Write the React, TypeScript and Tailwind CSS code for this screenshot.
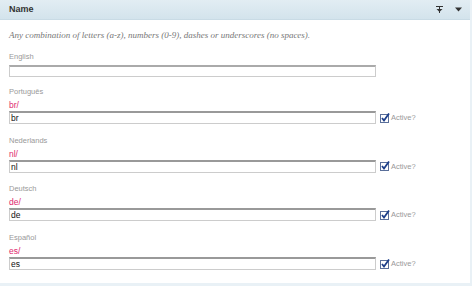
import React from "react";

const langs = [
    { name: "Português", prefix: "br/", value: "br" },
    { name: "Nederlands", prefix: "nl/", value: "nl" },
    { name: "Deutsch", prefix: "de/", value: "de" },
    { name: "Español", prefix: "es/", value: "es" },
];

function CheckIcon() {
    return (
        <svg width="10" height="10" viewBox="0 0 10 10">
            <rect x="0.5" y="1.5" width="8" height="8" fill="#fff" stroke="#5a6f9a" />
            <path d="M2 5 L4 7.5 L9 0.5" fill="none" stroke="#1d3f8a" strokeWidth="1.8" />
        </svg>
    );
}

export default function App() {
    return (
        <div
            className="w-[474px] h-[289px] bg-white overflow-hidden"
            style={{ fontFamily: '"Liberation Sans", Arial, sans-serif' }}
        >
            <div className="w-[472px] h-[286px] border-r-2 border-b-[3px] border-[#e9f1f6] flex flex-col">
                {/* header */}
                <div className="h-[20px] flex items-center justify-between pl-[9px] pr-[8px] bg-gradient-to-b from-[#e2edf3] to-[#d3e3ec] border-b border-[#c9dbe5]">
                    <span className="text-[9px] font-bold text-[#333]">Name</span>
                    <div className="flex items-center gap-[12px]">
                        <svg width="7" height="8" viewBox="0 0 7 8">
                            <rect x="0" y="0" width="7" height="1" fill="#333" />
                            <rect x="3" y="1" width="1" height="6" fill="#333" />
                            <path d="M0.5 3 L6.5 3 L3.5 6 Z" fill="#333" />
                        </svg>
                        <svg width="7" height="5" viewBox="0 0 7 5">
                            <path d="M0 0.5 L7 0.5 L3.5 4.5 Z" fill="#333" />
                        </svg>
                    </div>
                </div>

                <div className="pl-[9px] pt-[10px] flex flex-col">
                    <p
                        className="text-[9px] italic text-[#777] leading-[10px]"
                        style={{ fontFamily: '"Liberation Serif", "Times New Roman", serif' }}
                    >
                        Any combination of letters (a-z), numbers (0-9), dashes or underscores (no spaces).
                    </p>

                    <div className="mt-[12px] flex flex-col">
                        <span className="text-[7.5px] text-[#999] leading-[10px]">English</span>
                        <div className="mt-[3px] w-[367px] h-[12px] border border-[#ccc] border-t-2 border-t-[#aaa] bg-white" />
                    </div>

                    {langs.map((l, i) => (
                        <div key={l.value} className={i === 0 ? "mt-[10px] flex flex-col" : "mt-[11.7px] flex flex-col"}>
                            <span className="text-[7.5px] text-[#999] leading-[10px]">{l.name}</span>
                            <span className="mt-[3px] text-[8.5px] text-[#e0266e] leading-[10px]">{l.prefix}</span>
                            <div className="mt-[1px] flex items-center">
                                <div className="w-[367px] h-[13px] border border-[#ccc] border-t-2 border-t-[#999] bg-white flex items-center px-[1px]">
                                    <span className="text-[8.5px] text-[#111] leading-[10px]">{l.value}</span>
                                </div>
                                <div className="ml-[4px] flex items-center gap-[1px]">
                                    <CheckIcon />
                                    <span className="text-[7.5px] text-[#999]">Active?</span>
                                </div>
                            </div>
                        </div>
                    ))}
                </div>
            </div>
        </div>
    );
}
